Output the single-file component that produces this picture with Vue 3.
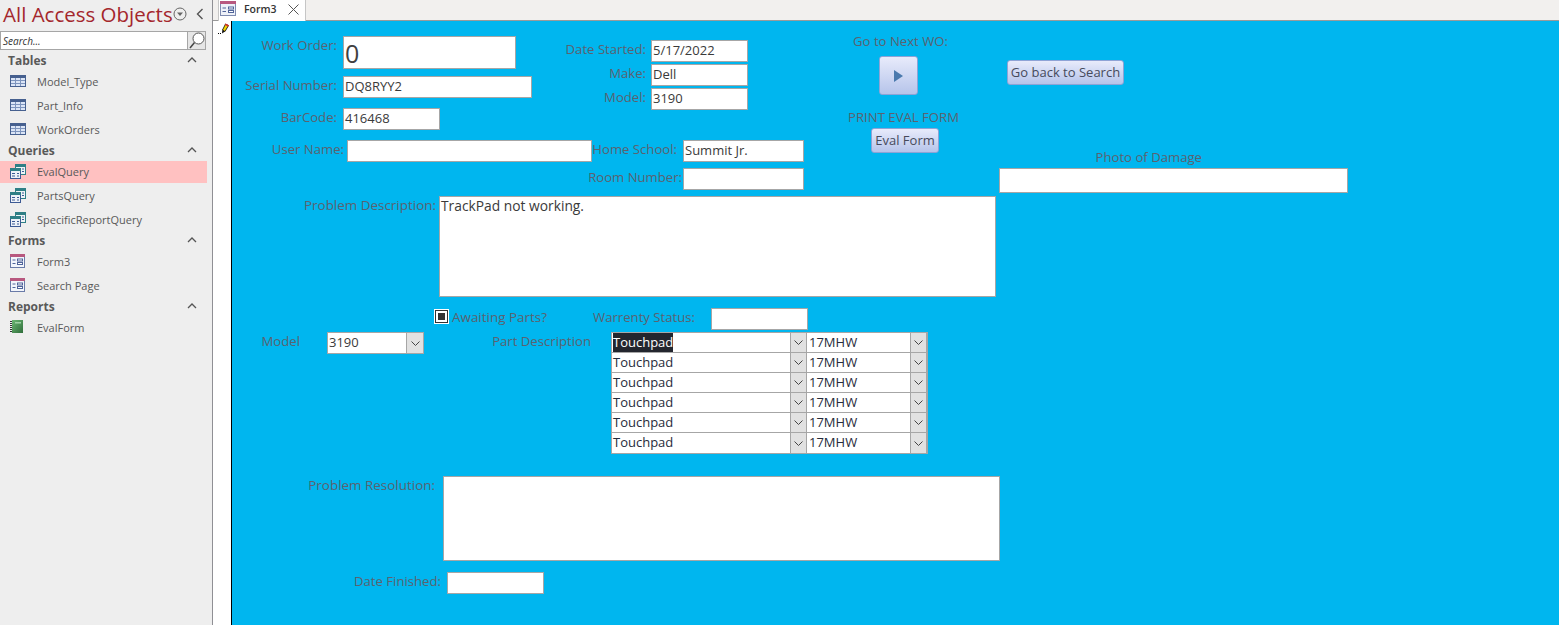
<script setup>
const navGroups = [
  { title: 'Tables', items: [
    { name: 'Model_Type', icon: 'table' }, { name: 'Part_Info', icon: 'table' }, { name: 'WorkOrders', icon: 'table' } ] },
  { title: 'Queries', items: [
    { name: 'EvalQuery', icon: 'query', active: true }, { name: 'PartsQuery', icon: 'query' }, { name: 'SpecificReportQuery', icon: 'query' } ] },
  { title: 'Forms', items: [
    { name: 'Form3', icon: 'form' }, { name: 'Search Page', icon: 'form' } ] },
  { title: 'Reports', items: [
    { name: 'EvalForm', icon: 'report' } ] },
]
const box = (x, y, w, h) => ({ left: x - 232 + 'px', top: y - 21 + 'px', width: w + 'px', height: h + 'px' })
const labels = [
  { t: 'Work Order:', r: 337, y: 45 }, { t: 'Serial Number:', r: 337, y: 85 }, { t: 'BarCode:', r: 337, y: 117 },
  { t: 'User Name:', r: 344, y: 149 }, { t: 'Date Started:', r: 646, y: 49 }, { t: 'Make:', r: 646, y: 73 },
  { t: 'Model:', r: 646, y: 97 }, { t: 'Home School:', r: 677, y: 149 }, { t: 'Room Number:', r: 682, y: 177 },
  { t: 'Problem Description:', r: 436, y: 205, wide: true }, { t: 'Awaiting Parts?', r: 547, y: 317, wide: true }, { t: 'Warrenty Status:', r: 695, y: 317 },
  { t: 'Model', r: 300, y: 341 }, { t: 'Part Description', r: 591, y: 341 }, { t: 'Problem Resolution:', r: 435, y: 485, wide: true },
  { t: 'Date Finished:', r: 441, y: 581 }, { t: 'Go to Next WO:', r: 948, y: 41 }, { t: 'PRINT EVAL FORM', r: 959, y: 117 },
  { t: 'Photo of Damage', r: 1202, y: 157 },
]
const fields = [
  { x: 343, y: 36, w: 173, h: 33, v: '0', big: true }, { x: 343, y: 76, w: 189, h: 22, v: 'DQ8RYY2' },
  { x: 343, y: 108, w: 97, h: 22, v: '416468' }, { x: 347, y: 140, w: 245, h: 22, v: '' },
  { x: 651, y: 40, w: 97, h: 22, v: '5/17/2022' }, { x: 651, y: 64, w: 97, h: 22, v: 'Dell' },
  { x: 651, y: 88, w: 97, h: 22, v: '3190' }, { x: 683, y: 140, w: 121, h: 22, v: 'Summit Jr.' },
  { x: 683, y: 168, w: 121, h: 22, v: '' }, { x: 999, y: 168, w: 349, h: 25, v: '' },
  { x: 439, y: 196, w: 557, h: 101, v: 'TrackPad not working.', area: true }, { x: 711, y: 308, w: 97, h: 22, v: '' },
  { x: 443, y: 476, w: 557, h: 85, v: '' }, { x: 447, y: 572, w: 97, h: 22, v: '' },
]
const rows = [0, 1, 2, 3, 4, 5]
</script>

<template>
  <div class="app">
    <aside class="nav">
      <div class="nav-head">
        <span class="nav-title">All Access Objects</span>
        <svg class="head-ic" width="14" height="14" viewBox="0 0 14 14"><circle cx="7" cy="7" r="6" fill="none" stroke="#666" /><path d="M4 5.500h6l-3 3.500z" fill="#666" /></svg>
        <svg class="head-ic back" width="8" height="14" viewBox="0 0 8 14"><path d="M6.500 2 1.500 7l5 5" fill="none" stroke="#555" stroke-width="1.400" /></svg>
      </div>
      <div class="search">
        <span class="search-text">Search...</span>
        <span class="search-btn">
          <svg width="17" height="17" viewBox="0 0 17 17"><circle cx="10.500" cy="6.500" r="5.500" fill="#fff" stroke="#555" /><path d="M6.500 10.500 2 16" stroke="#444" stroke-width="1.500" /></svg>
        </span>
      </div>
      <section v-for="g in navGroups" :key="g.title">
        <div class="group-head">
          <span>{{ g.title }}</span>
          <svg width="10" height="6" viewBox="0 0 10 6"><path d="M1 5l4-4 4 4" fill="none" stroke="#555" stroke-width="1.300" /></svg>
        </div>
        <div v-for="it in g.items" :key="it.name" class="item" :class="{ active: it.active }">
          <svg v-if="it.icon === 'table'" class="ic ic-table" width="16" height="12" viewBox="0 0 16 12">
            <rect x=".5" y=".5" width="15" height="11" fill="#dbe5f6" stroke="#46608f" />
            <rect x="1" y="1" width="14" height="2" fill="#46608f" />
            <path d="M1 5.500h14M1 8.500h14M5.500 3v8M10.500 3v8" stroke="#7d94bd" />
          </svg>
          <svg v-else-if="it.icon === 'query'" class="ic" width="16" height="15" viewBox="0 0 16 15">
            <rect x="5.500" y=".5" width="10" height="10" fill="#eef4f6" stroke="#2f7f86" />
            <rect x="5" y="0" width="11" height="3" fill="#2f7f86" />
            <rect x=".5" y="4.500" width="10" height="10" fill="#eef2f8" stroke="#3d5a94" />
            <rect x="0" y="4" width="11" height="3" fill="#2f7f86" />
            <path d="M2 9.500h3M7 9.500h2M2 12h3M7 12h2M12 5h2M12 7.500h2" stroke="#3d5a94" />
          </svg>
          <svg v-else-if="it.icon === 'form'" class="ic" width="15" height="14" viewBox="0 0 15 14">
            <rect x=".5" y=".5" width="14" height="13" fill="#f2f5fb" stroke="#6a7ba8" />
            <rect x="0" y="0" width="15" height="3" fill="#b8587f" />
            <path d="M2.500 6h3M2.500 9.500h3" stroke="#50649a" />
            <rect x="7.500" y="5" width="5" height="2" fill="#fff" stroke="#50649a" />
            <rect x="7.500" y="8.500" width="5" height="2" fill="#fff" stroke="#50649a" />
          </svg>
          <svg v-else class="ic" width="13" height="13" viewBox="0 0 13 13">
            <defs><linearGradient id="rep" x1="0" y1="0" x2="1" y2="1"><stop offset="0" stop-color="#6cb874" /><stop offset="1" stop-color="#2f6d3a" /></linearGradient></defs>
            <rect x="2" y="0" width="11" height="13" fill="url(#rep)" />
            <path d="M0 1.500h2M0 3.500h2M0 5.500h2M0 7.500h2M0 9.500h2M0 11.500h2" stroke="#333" />
            <rect x="5" y="2" width="6" height="1.500" fill="#9fd1a5" />
          </svg>
          <span class="item-name">{{ it.name }}</span>
        </div>
      </section>
    </aside>

    <main class="main">
      <div class="tabbar">
        <div class="tab">
          <svg width="16" height="15" viewBox="0 0 16 15">
            <rect x=".5" y=".5" width="15" height="14" fill="#eef1f8" stroke="#7f8cb0" />
            <rect x="0" y="0" width="16" height="3" fill="#b8587f" />
            <path d="M2.500 7h3.500M2.500 10.500h3.500" stroke="#50649a" />
            <rect x="8.500" y="6" width="5" height="2" fill="#fff" stroke="#50649a" />
            <rect x="8.500" y="9.500" width="5" height="2" fill="#fff" stroke="#50649a" />
          </svg>
          <span class="tab-name">Form3</span>
          <svg class="tab-x" width="11" height="11" viewBox="0 0 11 11"><path d="M.5.500l10 10M10.500.500l-10 10" stroke="#555" /></svg>
        </div>
      </div>
      <div class="doc">
        <div class="selector">
          <svg width="12" height="11" viewBox="0 0 12 11">
            <path d="M7.500 1l3 1.500L7 8.500 4.500 7z" fill="#f5d400" stroke="#000" stroke-width=".8" />
            <path d="M7.500 0.500l3.500 1.800-1 1.500-3-1.700z" fill="#d9302a" />
            <path d="M4.300 7l2.700 1.600-3 1.900z" fill="#111" />
            <path d="M0 10.500h1M2 10.500h1" stroke="#000" />
          </svg>
        </div>
        <div class="form">
          <span v-for="l in labels" :key="l.t + l.y" class="label" :class="{ wide: l.wide }" :style="{ right: (1559 - l.r) + 'px', top: (l.y - 31) + 'px' }">{{ l.t }}</span>

          <div v-for="f in fields" :key="f.x + '-' + f.y" class="field" :class="{ big: f.big, area: f.area }" :style="box(f.x, f.y, f.w, f.h)">{{ f.v }}</div>

          <div class="combo" :style="box(327, 332, 97, 22)">
            <span class="combo-text">3190</span>
            <span class="arrow"><svg width="9" height="5" viewBox="0 0 9 5"><path d="M.5.500l4 4 4-4" fill="none" stroke="#444" /></svg></span>
          </div>

          <div class="parts" :style="box(611, 332, 317, 122)">
            <div v-for="r in rows" :key="r" class="part-row">
              <div class="cell desc">
                <span class="cell-text"><span :class="{ sel: r === 0 }">Touchpad</span></span>
                <span class="arrow"><svg width="9" height="5" viewBox="0 0 9 5"><path d="M.5.500l4 4 4-4" fill="none" stroke="#444" /></svg></span>
              </div>
              <div class="cell code">
                <span class="cell-text">17MHW</span>
                <span class="arrow"><svg width="9" height="5" viewBox="0 0 9 5"><path d="M.5.500l4 4 4-4" fill="none" stroke="#444" /></svg></span>
              </div>
            </div>
          </div>

          <span class="check" :style="box(435, 310, 13, 13)"><i></i></span>

          <button class="btn" :style="box(879, 56, 39, 39)">
            <svg width="9" height="12" viewBox="0 0 9 12"><path d="M0 0l9 6-9 6z" fill="#4a79ad" /></svg>
          </button>
          <button class="btn" :style="box(871, 128, 68, 25)">Eval Form</button>
          <button class="btn" :style="box(1007, 60, 117, 25)">Go back to Search</button>
        </div>
      </div>
    </main>
  </div>
</template>

<style>
html, body { margin: 0; overflow: hidden; }
</style>

<style scoped>
.app { display: flex; width: 1559px; height: 625px; font-family: "Open Sans", "Noto Sans", sans-serif; background: #fff; overflow: hidden; }
.nav { width: 212px; flex: none; background: #eeeeee; border-right: 1px solid #8f8f94; box-sizing: content-box; }
.nav-head { height: 27px; margin-bottom: 4px; display: flex; align-items: center; padding-left: 3px; }
.nav-title { font-size: 20.500px; color: #a4262c; width: 170px; white-space: nowrap; line-height: 28px; }
.head-ic { flex: none; }
.back { margin-left: 9px; }
.search { box-sizing: border-box; height: 19px; margin-bottom: 1px; width: 206px; border: 1px solid #a6a6a6; background: #fff; display: flex; justify-content: space-between; align-items: center; }
.search-text { font-size: 10px; font-style: italic; color: #333; padding-left: 2px; }
.search-btn { width: 17px; height: 17px; background: #e6e6e6; border-left: 1px solid #a6a6a6; display: flex; align-items: center; justify-content: center; }
.group-head { box-sizing: border-box; height: 18px; display: flex; justify-content: space-between; align-items: center; padding: 0 15px 0 8px; font-size: 12px; font-weight: 700; color: #595959; width: 212px; }
.item { box-sizing: border-box; height: 24px; padding-top: 2px; display: flex; align-items: center; width: 207px; font-size: 11px; color: #595959; position: relative; }
.item.active { background: #ffc1c1; background-clip: content-box; }
.ic { position: absolute; left: 10px; top: 5px; }
.ic-table { top: 6px; }
.item-name { margin: -2px 0 0 37px; white-space: nowrap; }
.main { flex: 1; display: flex; flex-direction: column; min-width: 0; }
.tabbar { height: 20px; background: #f2f0ee; display: flex; padding-left: 5px; border-bottom: 1px solid #9a9a9a; box-sizing: content-box; }
.tab { box-sizing: border-box; width: 88px; height: 21px; background: #fff; border: solid #c6c6c6; border-width: 0 1px; display: flex; align-items: flex-start; position: relative; padding: 1px 0 0 1px; }
.tab-name { font-size: 10.500px; font-weight: 600; color: #333; margin-left: 8px; line-height: 16px; }
.tab-x { position: absolute; left: 69px; top: 4px; }
.doc { flex: 1; display: flex; min-height: 0; }
.selector { box-sizing: border-box; width: 19px; flex: none; background: #fff; padding: 2px 0 0 5px; border-right: 1px solid #000; }
.selector svg { display: block; }
.form { flex: 1; background: #00b6ef; position: relative; overflow: hidden; }
.label { position: absolute; font-size: 13.150px; line-height: 20px; color: #5b6270; white-space: nowrap; }
.label.wide { font-size: 13.450px; }
.field, .combo { position: absolute; box-sizing: border-box; background: #fff; border: 1px solid #a6a6a6; font-size: 13px; line-height: 18px; color: #3a3a3a; padding-left: 1px; white-space: nowrap; overflow: hidden; }
.field.big { font-size: 25px; line-height: 33px; color: #404040; }
.field.area { font-size: 13.800px; line-height: 18px; padding-left: 1px; }
.combo, .cell { display: flex; }
.combo { padding: 0; }
.combo-text { flex: 1; padding-left: 1px; min-width: 0; }
.cell-text { flex: 1; min-width: 0; }
.desc .cell-text { padding-left: 1px; }
.code .cell-text { padding-left: 2px; }
.arrow { box-sizing: border-box; width: 17px; flex: none; background: #e1e1e1; border: solid #a6a6a6; border-width: 0 1px; display: flex; align-items: center; justify-content: center; }
.combo .arrow { border-right: 0; }
.parts { position: absolute; box-sizing: border-box; background: #fff; border: 1px solid #a6a6a6; display: flex; flex-direction: column; font-size: 13px; line-height: 19px; color: #262b3a; }
.part-row { box-sizing: border-box; height: 20px; flex: none; display: flex; border-bottom: 1px solid #a6a6a6; overflow: hidden; }
.part-row:last-child { border-bottom: 0; }
.cell { height: 100%; }
.desc { width: 195px; flex: none; }
.code { flex: 1; }
.sel { background: #23262e; color: #fff; display: inline-block; vertical-align: top; }
.check { position: absolute; box-sizing: border-box; border: 1.500px solid #333; background: #fff; display: flex; align-items: center; justify-content: center; outline: 1px solid #fff; }
.check i { width: 7px; height: 7px; background: #333; }
.btn { position: absolute; box-sizing: border-box; padding: 0; border: 1px solid #8ea3d6; border-radius: 3px; background: linear-gradient(#e8ebfb, #b6c4ea); color: #464a5c; font: 13px/1 "Open Sans", "Noto Sans", sans-serif; display: flex; align-items: center; justify-content: center; white-space: nowrap; }
</style>
